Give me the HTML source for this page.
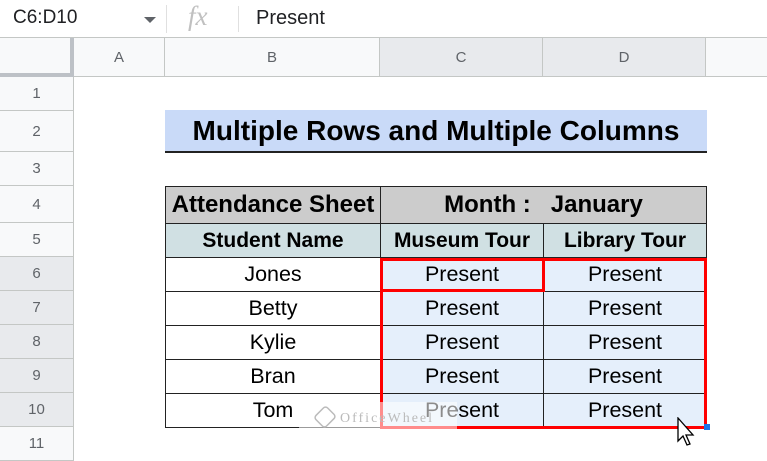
<!DOCTYPE html>
<html><head><style>
*{margin:0;padding:0;box-sizing:border-box}
body{width:767px;height:460px;overflow:hidden;background:#fff;font-family:"Liberation Sans",Arial,sans-serif;position:relative}
.a{position:absolute}
.rh{position:absolute;left:0;width:74px;border-bottom:1px solid #c4c7c5;border-right:1px solid #c4c7c5;background:#f8f9fa;color:#5f6368;font-size:15px;display:flex;align-items:center;justify-content:center}
.rh.s{background:#e8eaed}
.ch{position:absolute;top:38px;height:39px;border-right:1px solid #c4c7c5;border-bottom:1px solid #c4c7c5;background:#f8f9fa;color:#5f6368;font-size:15px;display:flex;align-items:center;justify-content:center}
.ch.s{background:#e8eaed}
.c{position:absolute;display:flex;align-items:center;justify-content:center;font-size:21.5px;color:#000;border:1px solid #222;white-space:nowrap}
.b{font-weight:bold}
</style></head><body>
<div class="a" style="left:0;top:0;width:767px;height:38px;background:#fff;border-bottom:1px solid #c4c7c5"></div>
<div class="a" style="left:13px;top:7px;font-size:19px;color:#202124">C6:D10</div>
<div class="a" style="left:144px;top:17px;width:0;height:0;border-left:6px solid transparent;border-right:6px solid transparent;border-top:6px solid #5f6368"></div>
<div class="a" style="left:166px;top:5px;width:1px;height:28px;background:#e0e0e0"></div>
<div class="a" style="left:188px;top:1px;font-family:'Liberation Serif',serif;font-style:italic;font-size:27px;color:#c0c0c0">fx</div>
<div class="a" style="left:238px;top:6px;width:1px;height:26px;background:#e0e0e0"></div>
<div class="a" style="left:256px;top:7px;font-size:20px;color:#202124">Present</div>
<div class="a" style="left:0;top:38px;width:74px;height:39px;background:#f8f9fa;border-right:4px solid #bdc1c6;border-bottom:4px solid #bdc1c6"></div>
<div class="ch" style="left:74px;width:91px">A</div>
<div class="ch" style="left:165px;width:215px">B</div>
<div class="ch s" style="left:380px;width:163px">C</div>
<div class="ch s" style="left:543px;width:163px">D</div>
<div class="ch" style="left:706px;width:61px;border-right:none"></div>
<div class="rh" style="top:77px;height:34px">1</div>
<div class="rh" style="top:111px;height:41px">2</div>
<div class="rh" style="top:152px;height:34px">3</div>
<div class="rh" style="top:186px;height:37px">4</div>
<div class="rh" style="top:223px;height:34px">5</div>
<div class="rh s" style="top:257px;height:34px">6</div>
<div class="rh s" style="top:291px;height:34px">7</div>
<div class="rh s" style="top:325px;height:34px">8</div>
<div class="rh s" style="top:359px;height:34px">9</div>
<div class="rh s" style="top:393px;height:34px">10</div>
<div class="rh" style="top:427px;height:34px">11</div>
<div class="a b" style="left:165px;top:110px;width:542px;height:43px;background:#c9daf8;border-bottom:2px solid #222;display:flex;align-items:center;justify-content:center;font-size:28px;white-space:nowrap">Multiple Rows and Multiple Columns</div>
<div class="c b" style="left:165px;top:186px;width:216px;height:38px;background:#cccccc;font-size:24px">Attendance Sheet</div>
<div class="c b" style="left:380px;top:186px;width:327px;height:38px;background:#cccccc;font-size:24px">Month :&nbsp;&nbsp;&nbsp;January</div>
<div class="c b" style="left:165px;top:223px;width:216px;height:35px;background:#d0e0e3;font-size:21px">Student Name</div>
<div class="c b" style="left:380px;top:223px;width:164px;height:35px;background:#d0e0e3;font-size:21px">Museum Tour</div>
<div class="c b" style="left:543px;top:223px;width:164px;height:35px;background:#d0e0e3;font-size:21px">Library Tour</div>
<div class="c" style="left:165px;top:257px;width:216px;height:35px">Jones</div>
<div class="c" style="left:165px;top:291px;width:216px;height:35px">Betty</div>
<div class="c" style="left:165px;top:325px;width:216px;height:35px">Kylie</div>
<div class="c" style="left:165px;top:359px;width:216px;height:35px">Bran</div>
<div class="c" style="left:165px;top:393px;width:216px;height:35px">Tom</div>
<div class="c" style="left:380px;top:257px;width:164px;height:35px;background:#e5effb">Present</div>
<div class="c" style="left:380px;top:291px;width:164px;height:35px;background:#e5effb">Present</div>
<div class="c" style="left:380px;top:325px;width:164px;height:35px;background:#e5effb">Present</div>
<div class="c" style="left:380px;top:359px;width:164px;height:35px;background:#e5effb">Present</div>
<div class="c" style="left:380px;top:393px;width:164px;height:35px;background:#e5effb">Present</div>
<div class="c" style="left:543px;top:257px;width:164px;height:35px;background:#e5effb">Present</div>
<div class="c" style="left:543px;top:291px;width:164px;height:35px;background:#e5effb">Present</div>
<div class="c" style="left:543px;top:325px;width:164px;height:35px;background:#e5effb">Present</div>
<div class="c" style="left:543px;top:359px;width:164px;height:35px;background:#e5effb">Present</div>
<div class="c" style="left:543px;top:393px;width:164px;height:35px;background:#e5effb">Present</div>
<div class="a" style="left:380px;top:258px;width:327px;height:171px;border:3px solid #ff0000"></div>
<div class="a" style="left:380px;top:258px;width:165px;height:34px;border:3px solid #ff0000"></div>
<div class="a" style="left:704px;top:424px;width:6px;height:6px;background:#1a73e8"></div>
<div class="a" style="left:299px;top:402px;width:158px;height:30px;background:rgba(255,255,255,0.55)"></div>
<div class="a" style="left:314px;top:405px;width:22px;height:24px;border:2px solid #bbb;border-radius:5px;transform:rotate(45deg) scale(.75)"></div>
<div class="a" style="left:340px;top:411px;font-family:'Liberation Serif',serif;font-size:14px;letter-spacing:2px;color:#bbb">OfficeWheel</div>
<svg class="a" style="left:677px;top:417px" width="22" height="34" viewBox="0 0 22 34"><path d="M1 1 L1 24 L6 19 L10 28 L13 27 L9 18 L16 18 Z" fill="#fff" stroke="#000" stroke-width="1.3"/></svg>
</body></html>
